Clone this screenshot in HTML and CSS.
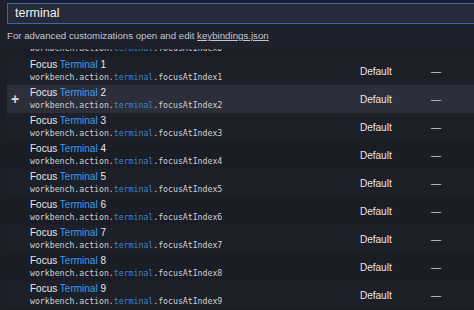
FILE: index.html
```html
<!DOCTYPE html>
<html lang="en">

<head>
    <meta charset="UTF-8">
    <title>Keyboard Shortcuts</title>
    <link rel="stylesheet" href="styles.css">
</head>

<body>
    <div class="header">
        <div class="search">terminal</div>
        <div class="hint">For advanced customizations open and edit <span class="link">keybindings.json</span></div>
    </div>

    <div class="list">
        <div class="scroll">
            <div class="row partial">
                <div class="add"></div>
                <div class="cmd">
                    <div class="id">workbench.action.<span class="hlm">terminal</span>.focusAtIndex0</div>
                </div>
                <div class="src"></div>
                <div class="when"></div>
            </div>
            <div class="row">
                <div class="add"></div>
                <div class="cmd">
                    <div class="label">Focus <span class="hl">Terminal</span> 1</div>
                    <div class="id">workbench.action.<span class="hlm">terminal</span>.focusAtIndex1</div>
                </div>
                <div class="src">Default</div>
                <div class="when">&mdash;</div>
            </div>
            <div class="row selected">
                <div class="add">+</div>
                <div class="cmd">
                    <div class="label">Focus <span class="hl">Terminal</span> 2</div>
                    <div class="id">workbench.action.<span class="hlm">terminal</span>.focusAtIndex2</div>
                </div>
                <div class="src">Default</div>
                <div class="when">&mdash;</div>
            </div>
            <div class="row">
                <div class="add"></div>
                <div class="cmd">
                    <div class="label">Focus <span class="hl">Terminal</span> 3</div>
                    <div class="id">workbench.action.<span class="hlm">terminal</span>.focusAtIndex3</div>
                </div>
                <div class="src">Default</div>
                <div class="when">&mdash;</div>
            </div>
            <div class="row">
                <div class="add"></div>
                <div class="cmd">
                    <div class="label">Focus <span class="hl">Terminal</span> 4</div>
                    <div class="id">workbench.action.<span class="hlm">terminal</span>.focusAtIndex4</div>
                </div>
                <div class="src">Default</div>
                <div class="when">&mdash;</div>
            </div>
            <div class="row">
                <div class="add"></div>
                <div class="cmd">
                    <div class="label">Focus <span class="hl">Terminal</span> 5</div>
                    <div class="id">workbench.action.<span class="hlm">terminal</span>.focusAtIndex5</div>
                </div>
                <div class="src">Default</div>
                <div class="when">&mdash;</div>
            </div>
            <div class="row">
                <div class="add"></div>
                <div class="cmd">
                    <div class="label">Focus <span class="hl">Terminal</span> 6</div>
                    <div class="id">workbench.action.<span class="hlm">terminal</span>.focusAtIndex6</div>
                </div>
                <div class="src">Default</div>
                <div class="when">&mdash;</div>
            </div>
            <div class="row">
                <div class="add"></div>
                <div class="cmd">
                    <div class="label">Focus <span class="hl">Terminal</span> 7</div>
                    <div class="id">workbench.action.<span class="hlm">terminal</span>.focusAtIndex7</div>
                </div>
                <div class="src">Default</div>
                <div class="when">&mdash;</div>
            </div>
            <div class="row">
                <div class="add"></div>
                <div class="cmd">
                    <div class="label">Focus <span class="hl">Terminal</span> 8</div>
                    <div class="id">workbench.action.<span class="hlm">terminal</span>.focusAtIndex8</div>
                </div>
                <div class="src">Default</div>
                <div class="when">&mdash;</div>
            </div>
            <div class="row">
                <div class="add"></div>
                <div class="cmd">
                    <div class="label">Focus <span class="hl">Terminal</span> 9</div>
                    <div class="id">workbench.action.<span class="hlm">terminal</span>.focusAtIndex9</div>
                </div>
                <div class="src">Default</div>
                <div class="when">&mdash;</div>
            </div>
        </div>
    </div>
</body>

</html>
```

FILE: styles.css
```css
body {
    background-color: #1a1d25;
    margin: 0;
    height: 310px;
    overflow: hidden;
    font-family: 'Liberation Sans', Arial, sans-serif;
}

.header {
    background-color: #1e212b;
    padding: 3px 0 0 7px;
    height: 46px;
}

.search {
    height: 19px;
    line-height: 19px;
    padding-left: 7px;
    border: 1px solid #2e6cb0;
    border-right: none;
    background-color: #272b39;
    color: #f2f2f2;
    font-size: 12.5px;
}

.hint {
    margin-top: 5px;
    font-size: 9.7px;
    line-height: 14px;
    color: #c3c6cc;
}

.link {
    text-decoration: underline;
}

.list {
    height: 261px;
    overflow: hidden;
    padding-left: 7px;
}

.scroll {
    margin-top: -20px;
}

.row {
    display: grid;
    grid-template-columns: 23px 330px 71px 1fr;
    align-items: center;
    height: 28px;
}

.row.partial {
    align-items: end;
}

.row:nth-child(even) {
    background-color: #1d2029;
}

.row.selected {
    background-color: #2c2f3a;
}

.add {
    color: #d8d8d8;
    font-size: 14px;
    font-weight: bold;
    padding-left: 4px;
}

.cmd {
    padding-top: 1px;
}

.partial .cmd {
    padding-bottom: 2px;
}

.label {
    font-size: 10px;
    line-height: 12px;
    color: #e8e8e8;
}

.hl {
    color: #3b9cf0;
}

.id {
    font-family: 'DejaVu Sans Mono', monospace;
    font-size: 8.2px;
    line-height: 13px;
    color: #cdd0d4;
}

.hlm {
    color: #3a86c8;
}

.src {
    font-size: 10px;
    color: #e8e8e8;
}

.when {
    font-size: 10px;
    color: #c9ccd2;
}
```
